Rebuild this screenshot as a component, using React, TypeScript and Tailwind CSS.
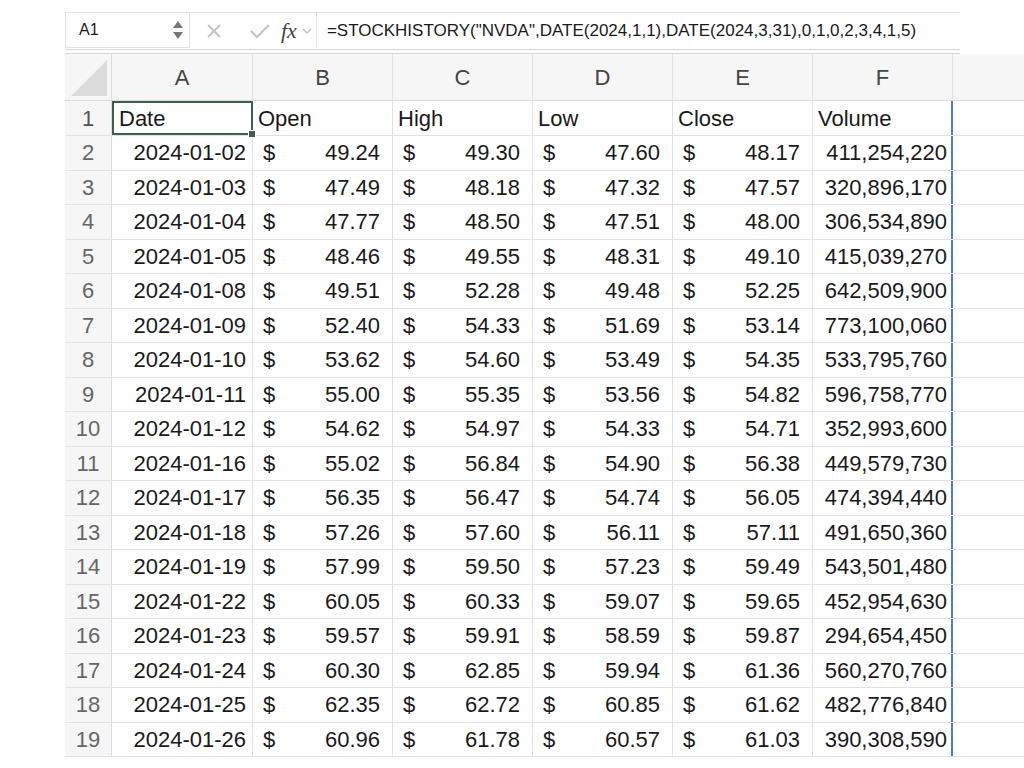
import React from "react";

const rows: string[][] = [
["2024-01-02","49.24","49.30","47.60","48.17","411,254,220"],
["2024-01-03","47.49","48.18","47.32","47.57","320,896,170"],
["2024-01-04","47.77","48.50","47.51","48.00","306,534,890"],
["2024-01-05","48.46","49.55","48.31","49.10","415,039,270"],
["2024-01-08","49.51","52.28","49.48","52.25","642,509,900"],
["2024-01-09","52.40","54.33","51.69","53.14","773,100,060"],
["2024-01-10","53.62","54.60","53.49","54.35","533,795,760"],
["2024-01-11","55.00","55.35","53.56","54.82","596,758,770"],
["2024-01-12","54.62","54.97","54.33","54.71","352,993,600"],
["2024-01-16","55.02","56.84","54.90","56.38","449,579,730"],
["2024-01-17","56.35","56.47","54.74","56.05","474,394,440"],
["2024-01-18","57.26","57.60","56.11","57.11","491,650,360"],
["2024-01-19","57.99","59.50","57.23","59.49","543,501,480"],
["2024-01-22","60.05","60.33","59.07","59.65","452,954,630"],
["2024-01-23","59.57","59.91","58.59","59.87","294,654,450"],
["2024-01-24","60.30","62.85","59.94","61.36","560,270,760"],
["2024-01-25","62.35","62.72","60.85","61.62","482,776,840"],
["2024-01-26","60.96","61.78","60.57","61.03","390,308,590"],
];

const cols = ["A","B","C","D","E","F"];
const widths = ["w-[141px]","w-[140px]","w-[140px]","w-[140px]","w-[140px]","w-[140px]"];

export default function App() {
  return (
    <div className="w-[1024px] h-[768px] bg-white text-[#1a1a1a]" style={{fontFamily:"'Liberation Sans', Arial, sans-serif"}}>
      <div className="pt-[12px] pl-[65px] w-[960px]">
        <div className="h-[36px] flex items-center border-t border-[#e2e2e2]">
          <div className="w-[125px] h-full border border-[#e2e2e2] border-t-0 flex items-center justify-between pl-[13px] pr-[5px] text-[16px]">
            <span>A1</span>
            <svg width="12" height="22" viewBox="0 0 12 22"><path d="M6 2L11 9H1Z" fill="#777"/><path d="M6 20L11 13H1Z" fill="#777"/></svg>
          </div>
          <svg className="ml-[15px]" width="18" height="18" viewBox="0 0 18 18"><path d="M3 3L15 15M15 3L3 15" stroke="#c4c4c4" strokeWidth="2"/></svg>
          <svg className="ml-[26px]" width="22" height="18" viewBox="0 0 22 18"><path d="M2 9L8 15L20 3" stroke="#c4c4c4" strokeWidth="2" fill="none"/></svg>
          <span className="ml-[10px] italic text-[22px] text-[#444]" style={{fontFamily:"'Liberation Serif', serif"}}>fx</span>
          <svg className="ml-[5px]" width="10" height="8" viewBox="0 0 10 8"><path d="M1 2L5 6L9 2" stroke="#bbb" strokeWidth="1.2" fill="none"/></svg>
          <div className="ml-[4px] flex-1 h-full border-l border-[#e2e2e2] flex items-center pl-[10px] text-[17px] whitespace-nowrap overflow-hidden">
            =STOCKHISTORY("NVDA",DATE(2024,1,1),DATE(2024,3,31),0,1,0,2,3,4,1,5)
          </div>
        </div>
        <div className="h-[5px] border-t border-b border-[#d8d8d8] mt-[1px]"></div>
      </div>
      <div className="pl-[65px] text-[22px]">
        <div className="flex h-[47px] bg-[#f6f6f6] border-b border-[#dcdcdc] text-[#444]">
          <div className="w-[47px] border-r border-[#dcdcdc] relative overflow-hidden">
            <svg className="absolute right-[4px] bottom-[4px]" width="36" height="36" viewBox="0 0 36 36"><path d="M36 0V36H0Z" fill="#dcdcdc"/></svg>
          </div>
          {cols.map((c,i)=>(
            <div key={c} className={`${widths[i]} border-r border-[#e2e2e2] flex items-center justify-center`}>{c}</div>
          ))}
        </div>
        <div className="flex h-[35px] border-b border-[#e2e2e2]">
          <div className="w-[47px] bg-[#f6f6f6] border-r border-[#dcdcdc] flex items-center justify-center text-[#555]">1</div>
          {["Date","Open","High","Low","Close","Volume"].map((h,i)=>(
            <div key={h} className={`${widths[i]} flex items-center pl-[5px] relative ${i===0?"border-2 border-[#3f5f48]":"border-r border-[#e2e2e2]"} ${i===5?"border-r-2 border-r-[#4a7bd0]":""}`}>
              {h}
              {i===0 && <div className="absolute right-[-5px] bottom-[-5px] w-[8px] h-[8px] bg-[#3f5f48] border border-white"></div>}
            </div>
          ))}
        </div>
        {rows.map((r,ri)=>(
          <div key={ri} className="flex h-[34.5px] border-b border-[#e2e2e2]">
            <div className="w-[47px] bg-[#f6f6f6] border-r border-[#dcdcdc] flex items-center justify-center text-[#666]">{ri+2}</div>
            <div className={`${widths[0]} border-r border-[#e2e2e2] flex items-center justify-end pr-[6px]`}>{r[0]}</div>
            {r.slice(1,5).map((v,j)=>(
              <div key={j} className={`${widths[j+1]} border-r border-[#e2e2e2] flex items-center justify-between pl-[10px] pr-[12px]`}>
                <span>$</span><span>{v}</span>
              </div>
            ))}
            <div className={`${widths[5]} border-r-2 border-r-[#4a7bd0] flex items-center justify-end pr-[4px]`}>{r[5]}</div>
          </div>
        ))}
      </div>
    </div>
  );
}
